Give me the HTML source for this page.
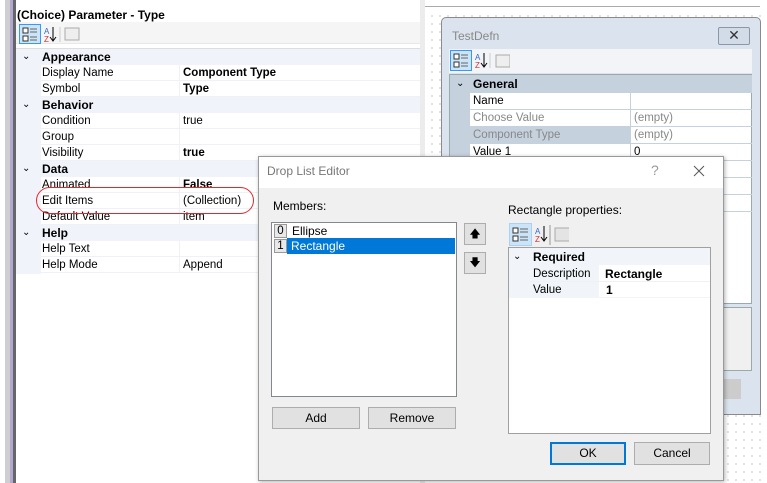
<!DOCTYPE html>
<html><head><style>
*{margin:0;padding:0;box-sizing:border-box}
body{width:767px;height:483px;overflow:hidden;background:#fff;font-family:"Liberation Sans",sans-serif;font-size:11.5px;color:#000;position:relative}
.a{position:absolute}
.row{position:absolute;height:16px;line-height:16px;white-space:nowrap}
.b{font-weight:bold}
.btn{position:absolute;background:#e1e1e1;border:1px solid #adadad;text-align:center;font-size:12px}
.dots{background-image:radial-gradient(#9a9a9a 0.6px,transparent 0.8px);background-size:8px 8px}
</style></head><body>
<div class="a" style="left:5px;top:0;width:5px;height:483px;background:#cfcfcf"></div>
<div class="a" style="left:10px;top:0;width:3px;height:483px;background:#b4a6d4"></div>
<div class="a" style="left:13px;top:0;width:3px;height:483px;background:#666"></div>
<div class="a b" style="left:17px;top:8px;font-size:12px">(Choice) Parameter - Type</div>
<div class="a" style="left:16px;top:22px;width:404px;height:22px;background:#f5f5f5;border-bottom:1px solid #e8e8e8"></div>
<svg class="a" style="left:19px;top:24px" width="80" height="20">
<rect x="0.5" y="0.5" width="21" height="19" fill="#cce4f7" stroke="#3399ff"/>
<rect x="4" y="4" width="5" height="5" fill="#fff" stroke="#333"/><rect x="4" y="12" width="5" height="5" fill="#fff" stroke="#333"/>
<path d="M11 5h7M11 8h7M11 13h7M11 16h7" stroke="#666"/>
<text x="25" y="10" font-size="8" fill="#36c" font-family="Liberation Sans">A</text><text x="25" y="18" font-size="8" fill="#c33" font-family="Liberation Sans">Z</text>
<path d="M34 3v13M31 13l3 4 3-4" stroke="#000" fill="none"/>
<path d="M41 3v15" stroke="#ccc"/>
<rect x="46" y="4" width="14" height="12" fill="#eee" stroke="#aaa"/>
</svg>
<div class="a" style="left:16px;top:48px;width:25px;height:226px;background:#f0f4fa"></div>
<div class="a" style="left:16px;top:48px;width:404px;height:1px;background:#ddd"></div>
<div id="lg"></div>
<div class="a" style="left:36px;top:187px;width:218px;height:27px;border:1.5px solid #e3262c;border-radius:14px"></div>
<div class="a" style="left:420px;top:0;width:5px;height:483px;background:#ececec"></div>
<div class="a" style="left:425px;top:6px;width:335px;height:1px;background:#aaa"></div>
<div class="a dots" style="left:428px;top:12px;width:339px;height:471px"></div>
<div class="a" style="left:441px;top:17px;width:320px;height:398px;background:#dbe4ee;border:1px solid #8a8a8a;border-radius:5px 5px 0 0"></div>
<div class="a" style="left:452px;top:29px;color:#888;font-size:12px">TestDefn</div>
<div class="a" style="left:718px;top:27px;width:32px;height:18px;border:1px solid #8a97a8;border-radius:2px;background:#d2dce8;text-align:center;line-height:15px;font-size:14px;color:#333">✕</div>
<div class="a" style="left:449px;top:49px;width:303px;height:24px;background:#f2f4f7"></div>
<svg class="a" style="left:450px;top:50px" width="60" height="22">
<rect x="0.5" y="0.5" width="21" height="20" fill="#cce4f7" stroke="#3399ff"/>
<rect x="4" y="4" width="5" height="5" fill="#fff" stroke="#333"/><rect x="4" y="12" width="5" height="5" fill="#fff" stroke="#333"/>
<path d="M11 5h7M11 8h7M11 13h7M11 16h7" stroke="#666"/>
<text x="25" y="10" font-size="8" fill="#36c" font-family="Liberation Sans">A</text><text x="25" y="18" font-size="8" fill="#c33" font-family="Liberation Sans">Z</text>
<path d="M34 3v13M31 13l3 4 3-4" stroke="#000" fill="none"/><path d="M40 3v15" stroke="#ccc"/>
<rect x="46" y="5" width="14" height="12" fill="#eee" stroke="#aaa"/>
</svg>
<div class="a" style="left:449px;top:74px;width:303px;height:230px;background:#fff;border:1px solid #9aa"></div>
<div class="a" style="left:450px;top:75px;width:302px;height:18px;background:#c5d1dd"></div>
<div class="a" style="left:450px;top:93px;width:20px;height:210px;background:#c5d1dd"></div>
<div class="row b" style="left:473px;top:76px;font-size:12px">General</div>
<div class="row" style="left:456px;top:76px;font-size:10px">⌄</div>
<div class="a" style="left:470px;top:109px;width:282px;height:1px;background:#c5d1dd"></div>
<div class="a" style="left:470px;top:126px;width:282px;height:1px;background:#c5d1dd"></div>
<div class="a" style="left:470px;top:127px;width:160px;height:16px;background:#c5d1dd"></div>
<div class="a" style="left:470px;top:143px;width:282px;height:1px;background:#c5d1dd"></div>
<div class="a" style="left:470px;top:160px;width:282px;height:1px;background:#c5d1dd"></div>
<div class="a" style="left:470px;top:177px;width:282px;height:1px;background:#c5d1dd"></div>
<div class="a" style="left:470px;top:194px;width:282px;height:1px;background:#c5d1dd"></div>
<div class="a" style="left:470px;top:211px;width:282px;height:1px;background:#c5d1dd"></div>
<div class="a" style="left:630px;top:93px;width:1px;height:118px;background:#c5d1dd"></div>
<div class="row" style="left:473px;top:93px">Name</div>
<div class="row" style="left:473px;top:110px;color:#888">Choose Value</div><div class="row" style="left:634px;top:110px;color:#888">(empty)</div>
<div class="row" style="left:473px;top:127px;color:#888">Component Type</div><div class="row" style="left:634px;top:127px;color:#888">(empty)</div>
<div class="row" style="left:473px;top:144px">Value 1</div><div class="row" style="left:634px;top:144px">0</div>
<div class="a" style="left:449px;top:307px;width:303px;height:64px;background:#f0f0f0;border:1px solid #9aa"></div>
<div class="a" style="left:723px;top:379px;width:18px;height:20px;background:#ccc"></div>
<div class="a" style="left:258px;top:156px;width:466px;height:325px;background:#f0f0f0;border:1px solid #999;box-shadow:1px 1px 4px rgba(0,0,0,.3)"></div>
<div class="a" style="left:259px;top:157px;width:464px;height:31px;background:#fff"></div>
<div class="a" style="left:267px;top:164px;color:#777;font-size:12px">Drop List Editor</div>
<div class="a" style="left:651px;top:162px;color:#999;font-size:14px">?</div>
<svg class="a" style="left:693px;top:165px" width="12" height="12"><path d="M1 1l10 10M11 1L1 11" stroke="#555"/></svg>
<div class="a" style="left:273px;top:199px;font-size:12px">Members:</div>
<div class="a" style="left:271px;top:222px;width:186px;height:175px;background:#fff;border:1px solid #828790"></div>
<div class="a" style="left:274px;top:224px;width:13px;height:14px;background:#e8e8e8;border:1px solid #999;text-align:center;line-height:12px">0</div>
<div class="a" style="left:274px;top:239px;width:13px;height:14px;background:#e8e8e8;border:1px solid #999;text-align:center;line-height:12px">1</div>
<div class="a" style="left:292px;top:224px;font-size:12px">Ellipse</div>
<div class="a" style="left:287px;top:238px;width:168px;height:16px;background:#0078d7;color:#fff;padding-left:4px;line-height:16px;font-size:12px">Rectangle</div>
<div class="btn" style="left:272px;top:407px;width:88px;height:22px;line-height:20px">Add</div>
<div class="btn" style="left:368px;top:407px;width:88px;height:22px;line-height:20px">Remove</div>
<div class="btn" style="left:464px;top:223px;width:22px;height:22px;line-height:20px;font-size:11px">🡅</div>
<div class="btn" style="left:464px;top:252px;width:22px;height:22px;line-height:20px;font-size:11px">🡇</div>
<div class="a" style="left:508px;top:203px;font-size:12px">Rectangle properties:</div>
<svg class="a" style="left:509px;top:223px" width="60" height="24">
<rect x="0.5" y="0.5" width="22" height="22" fill="#cce4f7" stroke="#a9d0f5"/>
<rect x="4" y="5" width="5" height="5" fill="#fff" stroke="#333"/><rect x="4" y="13" width="5" height="5" fill="#fff" stroke="#333"/>
<path d="M11 6h8M11 9h8M11 14h8M11 17h8" stroke="#666"/>
<text x="26" y="11" font-size="8" fill="#36c" font-family="Liberation Sans">A</text><text x="26" y="19" font-size="8" fill="#c33" font-family="Liberation Sans">Z</text>
<path d="M35 3v14M32 14l3 4 3-4" stroke="#000" fill="none"/><path d="M41 2v20" stroke="#999"/>
<rect x="46" y="5" width="15" height="13" fill="#e4e4e4" stroke="#aaa"/>
</svg>
<div class="a" style="left:508px;top:247px;width:203px;height:187px;background:#fff;border:1px solid #a0a0a0"></div>
<div class="a" style="left:509px;top:248px;width:201px;height:50px;background:#f1f5fa"></div>
<div class="a" style="left:529px;top:265px;width:181px;height:32px;background:#fff"></div>
<div class="a" style="left:529px;top:265px;width:70px;height:32px;background:#f1f5fa"></div>
<div class="a" style="left:529px;top:281px;width:181px;height:1px;background:#eef2f6"></div>
<div class="row" style="left:513px;top:249px;font-size:10px">⌄</div>
<div class="row b" style="left:533px;top:249px;font-size:12px">Required</div>
<div class="row" style="left:533px;top:266px">Description</div><div class="row b" style="left:605px;top:266px;font-size:12px">Rectangle</div>
<div class="row" style="left:533px;top:282px">Value</div><div class="row b" style="left:606px;top:282px;font-size:12px">1</div>
<div class="btn" style="left:550px;top:442px;width:76px;height:23px;line-height:19px;border:2px solid #0078d7">OK</div>
<div class="btn" style="left:634px;top:442px;width:76px;height:23px;line-height:21px">Cancel</div>
<script>
var rows=[["h","Appearance"],["Display Name","Component Type",1],["Symbol","Type",1],["h","Behavior"],["Condition","true"],["Group",""],["Visibility","true",1],["h","Data"],["Animated","False",1],["Edit Items","(Collection)"],["Default Value","item"],["h","Help"],["Help Text",""],["Help Mode","Append"]];
var h="";rows.forEach(function(r,i){var y=49+i*16;
if(r[0]=="h"){h+='<div class="a" style="left:41px;top:'+y+'px;width:379px;height:16px;background:#f0f4fa"></div><div class="row" style="left:22px;top:'+y+'px;font-size:10px">⌄</div><div class="row b" style="left:42px;top:'+y+'px;font-size:12px">'+r[1]+'</div>';}
else{h+='<div class="a" style="left:41px;top:'+(y+15)+'px;width:379px;height:1px;background:#eef1f5"></div><div class="a" style="left:179px;top:'+y+'px;width:1px;height:16px;background:#eef1f5"></div><div class="row" style="left:42px;top:'+y+'px">'+r[0]+'</div><div class="row'+(r[2]?' b':'')+'" style="left:183px;top:'+y+'px">'+r[1]+'</div>';}});
document.getElementById("lg").innerHTML=h;
</script>
</body></html>
